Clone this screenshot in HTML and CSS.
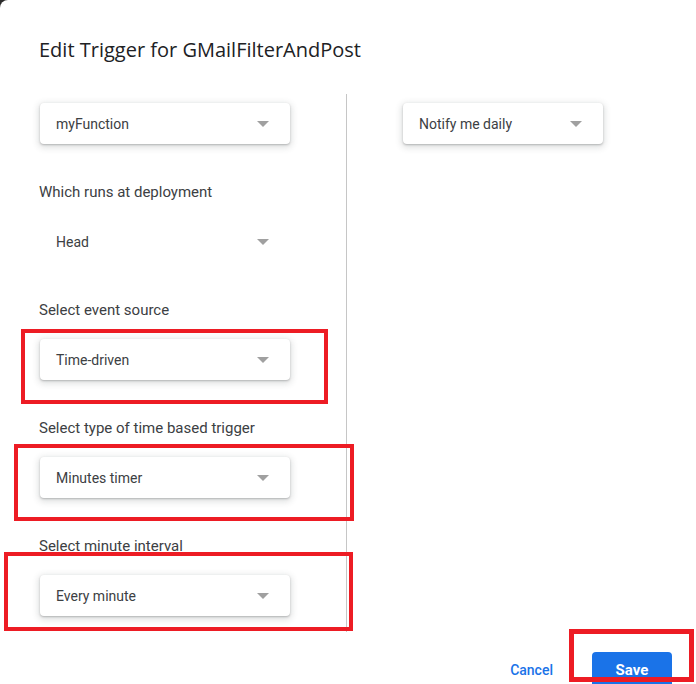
FILE: index.html
```html
<!DOCTYPE html>
<html lang="en">
<head>
<meta charset="utf-8">
<title>Edit Trigger</title>
<link rel="stylesheet" href="styles.css">
</head>
<body>
<div class="dialog">
  <h1 class="title">Edit Trigger for GMailFilterAndPost</h1>
  <div class="columns">
    <div class="col-left">
      <div class="select raised"><span>myFunction</span><span class="arrow"></span></div>
      <div class="field">
        <div class="label">Which runs at deployment</div>
        <div class="select flat"><span>Head</span><span class="arrow"></span></div>
      </div>
      <div class="field">
        <div class="label">Select event source</div>
        <div class="select raised"><span>Time-driven</span><span class="arrow"></span></div>
      </div>
      <div class="field">
        <div class="label">Select type of time based trigger</div>
        <div class="select raised"><span>Minutes timer</span><span class="arrow"></span></div>
      </div>
      <div class="field">
        <div class="label">Select minute interval</div>
        <div class="select raised"><span>Every minute</span><span class="arrow"></span></div>
      </div>
    </div>
    <div class="col-right">
      <div class="select raised narrow"><span>Notify me daily</span><span class="arrow"></span></div>
    </div>
  </div>
  <div class="actions">
    <button class="btn-text">Cancel</button>
    <button class="btn-primary">Save</button>
  </div>
  <div class="mark mark-1"></div>
  <div class="mark mark-2"></div>
  <div class="mark mark-3"></div>
  <div class="mark mark-4"></div>
</div>
</body>
</html>
```
FILE: styles.css
```css
html, body {
  margin: 0;
  padding: 0;
  background: #2b2b2b;
}
body {
  width: 696px;
  height: 684px;
  overflow: hidden;
}
.dialog {
  position: relative;
  width: 696px;
  height: 684px;
  background: #ffffff;
  border-top-left-radius: 8px;
  overflow: hidden;
  box-sizing: border-box;
  padding-top: 38px;
  font-family: Roboto, "Liberation Sans", sans-serif;
  color: #3c4043;
}
.title {
  margin: 0 0 0 39px;
  font-family: "Open Sans", Roboto, sans-serif;
  font-weight: 400;
  font-size: 20px;
  line-height: 24px;
  color: #202124;
}
.columns {
  display: flex;
  margin-top: 32px;
}
.col-left {
  width: 347px;
  box-sizing: border-box;
  padding: 9px 0 16px 40px;
  border-right: 1px solid #c6c6c6;
}
.col-right {
  padding: 9px 0 0 56px;
}
.field {
  margin-top: 38px;
}
.label {
  font-size: 15px;
  line-height: 20px;
  color: #3c4043;
  margin-left: -1px;
}
.field .select {
  margin-top: 19px;
}
.select {
  width: 250px;
  height: 41px;
  box-sizing: border-box;
  padding: 0 21px 0 16px;
  display: flex;
  align-items: center;
  justify-content: space-between;
  border-radius: 4px;
  font-size: 14px;
  color: #3c4043;
  background: #fff;
}
.select.raised {
  box-shadow: 0 1px 2px rgba(60, 64, 67, 0.3), 0 2px 6px 2px rgba(60, 64, 67, 0.15);
}
.select.narrow {
  width: 200px;
}
.arrow {
  width: 0;
  height: 0;
  border-left: 6px solid transparent;
  border-right: 6px solid transparent;
  border-top: 6px solid #a0a0a0;
}
.actions {
  display: flex;
  justify-content: flex-end;
  align-items: center;
  margin-top: 20px;
  padding-right: 24px;
}
.btn-text, .btn-primary {
  font-family: Roboto, "Liberation Sans", sans-serif;
  font-size: 14px;
  font-weight: 500;
  height: 36px;
  border: none;
  border-radius: 4px;
  cursor: pointer;
}
.btn-text {
  background: transparent;
  color: #1a73e8;
  padding: 0 8px;
  margin-right: 31px;
}
.btn-primary {
  background: #1a73e8;
  color: #fff;
  width: 80px;
  font-weight: 700;
  font-size: 15px;
}
.mark {
  position: absolute;
  box-sizing: border-box;
  border: 4px solid #ed1c24;
}
.mark-1 { left: 21px; top: 329px; width: 307px; height: 75px; }
.mark-2 { left: 14px; top: 444px; width: 340px; height: 77px; }
.mark-3 { left: 4px; top: 552px; width: 349px; height: 79px; }
.mark-4 { left: 569px; top: 629px; width: 125px; height: 53px; border-width: 5px; }
```
